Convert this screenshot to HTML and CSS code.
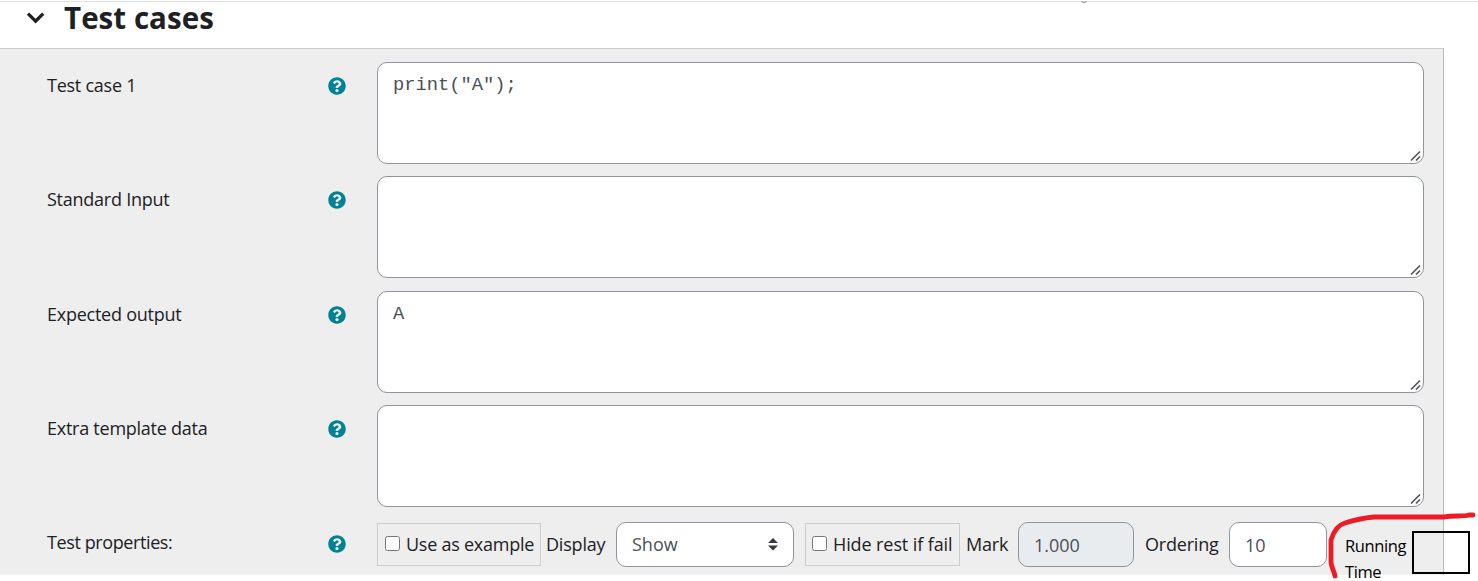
FILE: index.html
```html
<!DOCTYPE html>
<html lang="en">
<head>
    <meta charset="UTF-8">
    <meta name="viewport" content="width=device-width, initial-scale=1.0">
    <title>Test cases</title>
    <link rel="stylesheet" href="styles.css">
</head>
<body>

    <svg class="top-mark" width="8" height="4" viewBox="0 0 8 4"><path d="M1.5 0a2.5 2.5 0 0 0 5 0" fill="none" stroke="#a5a5ad" stroke-width="1.3"/></svg>

    <header class="section-header">
        <svg class="chevron" width="20" height="14" viewBox="0 0 20 14"><path d="M2 2.6L9.6 10.2L17.2 2.6" fill="none" stroke="#1d2125" stroke-width="3.3"/></svg>
        <h3>Test cases</h3>
    </header>

    <svg class="symbols" width="0" height="0">
        <symbol id="help" viewBox="0 0 512 512">
            <path fill="#008196" d="M504 256c0 137-111 248-248 248S8 393 8 256 119 8 256 8s248 111 248 248zM262.700 90c-54.500 0-89.300 23-116.500 63.800-3.500 5.300-2.400 12.400 2.700 16.300l34.700 26.300c5.200 3.900 12.600 3 16.700-2.100 17.900-22.700 30.100-35.800 57.300-35.800 20.400 0 45.700 13.100 45.700 33 0 15-12.400 22.700-32.500 34C247.100 238.500 216 254.900 216 296v4c0 6.600 5.400 12 12 12h56c6.600 0 12-5.400 12-12v-1.300c0-28.500 83.200-29.600 83.200-106.700 0-58-60.200-102-116.500-102zM256 338c-25.400 0-46 20.600-46 46s20.600 46 46 46 46-20.600 46-46-20.600-46-46-46z"/>
        </symbol>
        <symbol id="grip" viewBox="0 0 12 12">
            <path d="M1 10.500L10 1.500M6 10.500L10 6.500" fill="none" stroke="#555" stroke-width="1.700"/>
        </symbol>
    </svg>

    <main class="panel">
        <div class="row">
            <div class="row-label"><label for="test-code">Test case 1</label><svg class="help"><use href="#help"/></svg></div>
            <div class="area"><textarea id="test-code">print("A");</textarea><svg class="grip"><use href="#grip"/></svg></div>
        </div>
        <div class="row">
            <div class="row-label"><label for="stdin">Standard Input</label><svg class="help"><use href="#help"/></svg></div>
            <div class="area"><textarea id="stdin"></textarea><svg class="grip"><use href="#grip"/></svg></div>
        </div>
        <div class="row">
            <div class="row-label"><label for="expected">Expected output</label><svg class="help"><use href="#help"/></svg></div>
            <div class="area"><textarea id="expected">A</textarea><svg class="grip"><use href="#grip"/></svg></div>
        </div>
        <div class="row">
            <div class="row-label"><label for="extra">Extra template data</label><svg class="help"><use href="#help"/></svg></div>
            <div class="area"><textarea id="extra"></textarea><svg class="grip"><use href="#grip"/></svg></div>
        </div>

        <div class="row properties">
            <div class="row-label"><span>Test properties:</span><svg class="help"><use href="#help"/></svg></div>
            <label class="check-box example"><input type="checkbox"><span>Use as example</span></label>
            <label class="text display" for="display">Display</label>
            <div class="select-wrap">
                <select id="display" class="control">
                    <option>Show</option>
                    <option>Hide</option>
                </select>
                <svg class="arrows" width="10" height="12" viewBox="0 0 10 12"><path d="M0 5L5 0L10 5ZM0 7.500L5 12.500L10 7.500Z" fill="#343a40"/></svg>
            </div>
            <label class="check-box hide-rest"><input type="checkbox"><span>Hide rest if fail</span></label>
            <label class="text mark" for="mark">Mark</label>
            <input id="mark" class="control mark-input" type="text" value="1.000" disabled>
            <label class="text ordering" for="ordering">Ordering</label>
            <input id="ordering" class="control order-input" type="text" value="10">
            <div class="running">
                <div class="running-label">Running<br>Time</div>
                <div class="running-box"></div>
            </div>
        </div>
    </main>

    <!-- Red pen line around the running time field -->
    <svg class="pen" width="158" height="76" viewBox="1320 505 158 76">
        <path d="M1335 576C1334 571 1331 566 1331 562V540C1334 530 1338 525 1345 523C1354 520 1363 518 1374 517H1445C1453 515 1463 517 1469 515L1473 515" fill="none" stroke="#ed1c24" stroke-width="4.800" stroke-linecap="round" stroke-linejoin="round"/>
    </svg>

</body>
</html>
```

FILE: styles.css
```css
* {
    box-sizing: border-box;
}

body {
    margin: 0;
    height: 581px;
    position: relative;
    background: #fff;
    color: #1d2125;
    font-family: "Open Sans", "Noto Sans", sans-serif;
    font-size: 18px;
    letter-spacing: -0.25px;
    line-height: 28px;
    border-top: 1px solid #fff;
}

.symbols {
    display: none;
}

.top-mark {
    position: absolute;
    left: 1080px;
    top: -1px;
}

.section-header {
    display: flex;
    height: 47px;
    border-top: 1px solid #dee2e6;
    padding-left: 26px;
}

.chevron {
    margin-top: 9px;
}

h3 {
    margin: 0 0 0 18px;
    font-size: 29.5px;
    font-weight: 700;
    letter-spacing: 0.05px;
    line-height: 32px;
    white-space: nowrap;
}

/* Grey form area */
.panel {
    width: 1444px;
    height: 527px;
    padding: 13px 19px 0 47px;
    background: #eee;
    border-top: 1px solid #ccc;
    border-right: 1px solid #bbb;
}

.row {
    display: flex;
    height: 102px;
    margin-bottom: 12.3px;
}

.row-label {
    display: flex;
    flex: none;
    justify-content: space-between;
    width: 299px;
    margin-right: 31px;
    padding-top: 9px;
    white-space: nowrap;
}

.help {
    width: 18px;
    height: 18px;
    margin-top: 6px;
}

.area {
    position: relative;
    flex: none;
    width: 1047px;
    height: 102px;
}

textarea {
    display: block;
    width: 100%;
    height: 100%;
    margin: 0;
    padding: 8px 15px;
    border: 1px solid #8f959e;
    border-radius: 10px;
    background: #fff;
    color: #495057;
    font-family: "Liberation Mono", monospace;
    font-size: 18.750px;
    letter-spacing: 0;
    line-height: 28px;
    resize: none;
}

.grip {
    position: absolute;
    right: 2px;
    bottom: 2px;
    width: 12px;
    height: 12px;
    pointer-events: none;
}

/* Test properties */
.properties {
    height: 54px;
    margin: 0;
    padding-top: 2.800px;
    align-items: flex-start;
}

.properties .row-label {
    padding-top: 6px;
    letter-spacing: -0.4px;
}

.properties .help {
    margin-top: 7px;
}

.check-box {
    display: flex;
    flex: none;
    align-items: center;
    height: 43px;
    margin-top: 1px;
    padding-left: 7px;
    border: 1px solid #ccc;
    white-space: nowrap;
}

.check-box input {
    flex: none;
    width: 15px;
    height: 15px;
    margin: -2px 6px 0 0;
}

.example {
    width: 164px;
}

.hide-rest {
    width: 155px;
    margin-left: 11px;
    padding-left: 6px;
    letter-spacing: -0.1px;
}

.text {
    flex: none;
    margin-top: 8px;
    letter-spacing: -0.2px;
    white-space: nowrap;
}

.display {
    width: 70px;
    margin-left: 5px;
}

.mark {
    width: 52px;
    margin-left: 6px;
}

.ordering {
    width: 84px;
    margin-left: 11px;
}

.control {
    flex: none;
    height: 45px;
    margin: 0;
    padding: 2px 15px 0;
    border: 1px solid #8f959e;
    border-radius: 10px;
    background: #fff;
    color: #495057;
    font: inherit;
}

.select-wrap {
    position: relative;
    flex: none;
}

select.control {
    display: block;
    width: 178px;
    padding-top: 0;
    appearance: none;
}

.arrows {
    position: absolute;
    right: 16px;
    top: 16px;
    overflow: visible;
}

.mark-input {
    width: 116px;
}

.mark-input:disabled {
    background: #e9ecef;
}

.order-input {
    width: 98px;
}

.running {
    display: flex;
    flex: none;
    width: 125px;
    margin: 9px -100px 0 18px;
    color: #000;
    font-size: 16.5px;
    letter-spacing: -0.4px;
    line-height: 26px;
}

.running-label {
    flex: none;
    width: 67px;
    margin-top: 2px;
}

.running-box {
    flex: none;
    width: 58px;
    height: 43px;
    border: 2px solid #000;
}

.pen {
    position: absolute;
    left: 1320px;
    top: 504px;
}

html {
    height: 581px;
    overflow: hidden;
}
```
